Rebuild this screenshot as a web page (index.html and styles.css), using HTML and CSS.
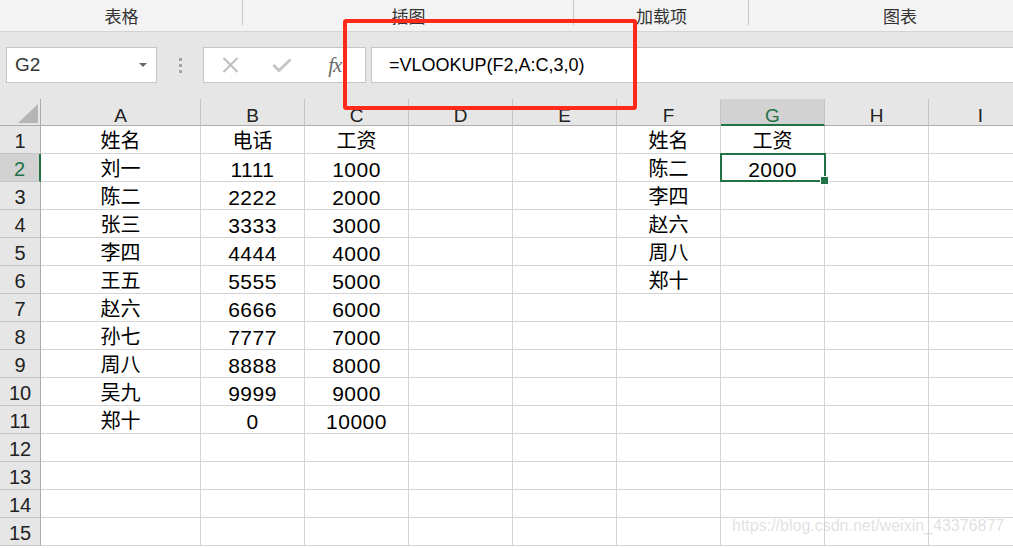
FILE: index.html
```html
<!DOCTYPE html>
<html>
<head>
  <meta charset="utf-8">
  <link rel="stylesheet" href="styles.css">
</head>
<body>
  <div class="ribbon">
    <div class="group g1">表格</div>
    <div class="group g2">插图</div>
    <div class="group g3">加载项</div>
    <div class="group g4">图表</div>
  </div>

  <div class="toolbar">
    <div class="namebox">
      <span>G2</span>
      <span class="caret"></span>
    </div>
    <div class="grip"><i></i><i></i><i></i></div>
    <div class="fbtns">
      <span class="fbtn">
        <svg width="17" height="16" viewBox="0 0 17 16"><path d="M1.5 1 L15.5 15 M15.5 1 L1.5 15" stroke="#bdbdbd" stroke-width="2" fill="none"/></svg>
      </span>
      <span class="fbtn">
        <svg width="20" height="14" viewBox="0 0 20 14"><path d="M1.5 7 L7 12.5 L18.5 1.5" stroke="#c6c6c6" stroke-width="3" fill="none"/></svg>
      </span>
      <span class="fbtn fx">fx</span>
    </div>
    <div class="formula">=VLOOKUP(F2,A:C,3,0)</div>
  </div>

  <div class="sheet">
    <!-- column headers -->
    <div class="ch corner">
      <svg width="41" height="27" viewBox="0 0 41 27"><polygon points="38,5 38,24 18,24" fill="#b5b5b5"/></svg>
    </div>
    <div class="ch">A</div><div class="ch">B</div><div class="ch">C</div><div class="ch">D</div>
    <div class="ch">E</div><div class="ch">F</div><div class="ch sel">G</div><div class="ch">H</div><div class="ch">I</div>

    <div class="rh">1</div><div class="c">姓名</div><div class="c">电话</div><div class="c">工资</div><div class="c"></div><div class="c"></div><div class="c">姓名</div><div class="c">工资</div><div class="c"></div><div class="c"></div>
    <div class="rh sel">2</div><div class="c">刘一</div><div class="c num">1111</div><div class="c num">1000</div><div class="c"></div><div class="c"></div><div class="c">陈二</div><div class="c num active">2000<span class="handle"></span></div><div class="c"></div><div class="c"></div>
    <div class="rh">3</div><div class="c">陈二</div><div class="c num">2222</div><div class="c num">2000</div><div class="c"></div><div class="c"></div><div class="c">李四</div><div class="c"></div><div class="c"></div><div class="c"></div>
    <div class="rh">4</div><div class="c">张三</div><div class="c num">3333</div><div class="c num">3000</div><div class="c"></div><div class="c"></div><div class="c">赵六</div><div class="c"></div><div class="c"></div><div class="c"></div>
    <div class="rh">5</div><div class="c">李四</div><div class="c num">4444</div><div class="c num">4000</div><div class="c"></div><div class="c"></div><div class="c">周八</div><div class="c"></div><div class="c"></div><div class="c"></div>
    <div class="rh">6</div><div class="c">王五</div><div class="c num">5555</div><div class="c num">5000</div><div class="c"></div><div class="c"></div><div class="c">郑十</div><div class="c"></div><div class="c"></div><div class="c"></div>
    <div class="rh">7</div><div class="c">赵六</div><div class="c num">6666</div><div class="c num">6000</div><div class="c"></div><div class="c"></div><div class="c"></div><div class="c"></div><div class="c"></div><div class="c"></div>
    <div class="rh">8</div><div class="c">孙七</div><div class="c num">7777</div><div class="c num">7000</div><div class="c"></div><div class="c"></div><div class="c"></div><div class="c"></div><div class="c"></div><div class="c"></div>
    <div class="rh">9</div><div class="c">周八</div><div class="c num">8888</div><div class="c num">8000</div><div class="c"></div><div class="c"></div><div class="c"></div><div class="c"></div><div class="c"></div><div class="c"></div>
    <div class="rh">10</div><div class="c">吴九</div><div class="c num">9999</div><div class="c num">9000</div><div class="c"></div><div class="c"></div><div class="c"></div><div class="c"></div><div class="c"></div><div class="c"></div>
    <div class="rh">11</div><div class="c">郑十</div><div class="c num">0</div><div class="c num">10000</div><div class="c"></div><div class="c"></div><div class="c"></div><div class="c"></div><div class="c"></div><div class="c"></div>
    <div class="rh">12</div><div class="c"></div><div class="c"></div><div class="c"></div><div class="c"></div><div class="c"></div><div class="c"></div><div class="c"></div><div class="c"></div><div class="c"></div>
    <div class="rh">13</div><div class="c"></div><div class="c"></div><div class="c"></div><div class="c"></div><div class="c"></div><div class="c"></div><div class="c"></div><div class="c"></div><div class="c"></div>
    <div class="rh">14</div><div class="c"></div><div class="c"></div><div class="c"></div><div class="c"></div><div class="c"></div><div class="c"></div><div class="c"></div><div class="c"></div><div class="c"></div>
    <div class="rh">15</div><div class="c"></div><div class="c"></div><div class="c"></div><div class="c"></div><div class="c"></div><div class="c"></div><div class="c"></div><div class="c"></div><div class="c"></div>
  </div>

  <!-- annotation box drawn over the formula bar -->
  <div class="highlight"></div>
  <div class="watermark">https://blog.csdn.net/weixin_43376877</div>
</body>
</html>
```

FILE: styles.css
```css
body {
  margin: 0;
  width: 1013px;
  height: 548px;
  overflow: hidden;
  position: relative;
  background: #fff;
  font-family: "Liberation Sans", "Noto Sans CJK SC", sans-serif;
  color: #000;
}

/* ribbon group labels */
.ribbon {
  display: flex;
  height: 31px;
  background: #f3f3f3;
  border-bottom: 1px solid #d4d4d4;
  overflow: hidden;
}

.group {
  flex: none;
  position: relative;
  text-align: center;
  font-size: 17px;
  line-height: 20px;
  padding-top: 8px;
  color: #333;
}

.group::after {
  content: "";
  position: absolute;
  right: 0;
  top: 0;
  height: 25px;
  border-right: 1px solid #c6c6c6;
}

.g1 { width: 243px; }
.g2 { width: 331px; }
.g3 { width: 175px; }
.g4 { width: 302px; }
.g4::after { display: none; }

/* name box + formula bar */
.toolbar {
  display: flex;
  align-items: stretch;
  height: 67px;
  padding-top: 15px;
  box-sizing: border-box;
  background: #e6e6e6;
}

.toolbar > div { height: 36px; box-sizing: border-box; }

.namebox {
  margin-left: 6px;
  width: 151px;
  background: #fff;
  border: 1px solid #c6c6c6;
  display: flex;
  align-items: center;
  justify-content: space-between;
  padding: 0 9px 0 8px;
  font-size: 19px;
  color: #333;
}

.caret {
  width: 0;
  height: 0;
  border-left: 4px solid transparent;
  border-right: 4px solid transparent;
  border-top: 4px solid #666;
}

.grip {
  width: 46px;
  display: flex;
  flex-direction: column;
  align-items: center;
  justify-content: center;
  gap: 3px;
}

.grip i {
  width: 3px;
  height: 3px;
  background: #a4a4a4;
}

.fbtns {
  width: 163px;
  background: #fff;
  border: 1px solid #c6c6c6;
  display: flex;
  align-items: center;
}

.fbtn {
  width: 54px;
  display: flex;
  justify-content: center;
  align-items: center;
}

.fx {
  font-family: "Liberation Serif", serif;
  font-style: italic;
  font-size: 21px;
  color: #6a6a6a;
  letter-spacing: -1px;
  padding-right: 4px;
}

.formula {
  flex: 1;
  margin-left: 5px;
  background: #fff;
  border: 1px solid #c6c6c6;
  border-right: none;
  padding-left: 17px;
  font-size: 18px;
  line-height: 34px;
}

/* worksheet grid */
.sheet {
  display: grid;
  grid-template-columns: 41px 160px repeat(8, 104px);
  grid-template-rows: 27px repeat(15, 28px);
  background: #e6e6e6;
}

.ch,
.rh,
.c {
  box-sizing: border-box;
  text-align: center;
  white-space: nowrap;
}

.ch {
  background: #e6e6e6;
  border-right: 1px solid #c4c4c4;
  border-bottom: 1px solid #ababab;
  font-size: 19px;
  line-height: 27px;
  padding-top: 3px;
  color: #222;
}

.ch.corner { padding: 0; line-height: 0; border-right-color: #ababab; }

.ch.sel {
  background: #d2d2d2;
  color: #217346;
  border-bottom: 2px solid #217346;
}

.rh {
  background: #e6e6e6;
  border-right: 1px solid #ababab;
  border-bottom: 1px solid #c4c4c4;
  font-size: 20px;
  line-height: 25px;
  padding-top: 3px;
  color: #222;
}

.rh.sel {
  background: #d2d2d2;
  color: #217346;
  border-right: 2px solid #217346;
}

.c {
  background: #fff;
  border-right: 1px solid #d4d4d4;
  border-bottom: 1px solid #d4d4d4;
  font-size: 20px;
  line-height: 25px;
  padding-top: 3px;
}

.c.num {
  font-size: 21px;
  letter-spacing: 0.5px;
}

.c.active {
  position: relative;
}

.c.active::before {
  content: "";
  position: absolute;
  left: -1px;
  top: -1px;
  right: -2px;
  bottom: -1px;
  border: 2px solid #217346;
}

.handle {
  position: absolute;
  right: -5px;
  bottom: -4px;
  width: 7px;
  height: 7px;
  background: #217346;
  border: 1px solid #fff;
}

.highlight {
  position: absolute;
  left: 343px;
  top: 19px;
  width: 294px;
  height: 91px;
  box-sizing: border-box;
  border: 4px solid #ff2a1a;
  border-radius: 3px;
}

.watermark {
  position: absolute;
  left: 732px;
  top: 517px;
  font-size: 16px;
  color: rgba(200, 200, 200, 0.55);
}
```
